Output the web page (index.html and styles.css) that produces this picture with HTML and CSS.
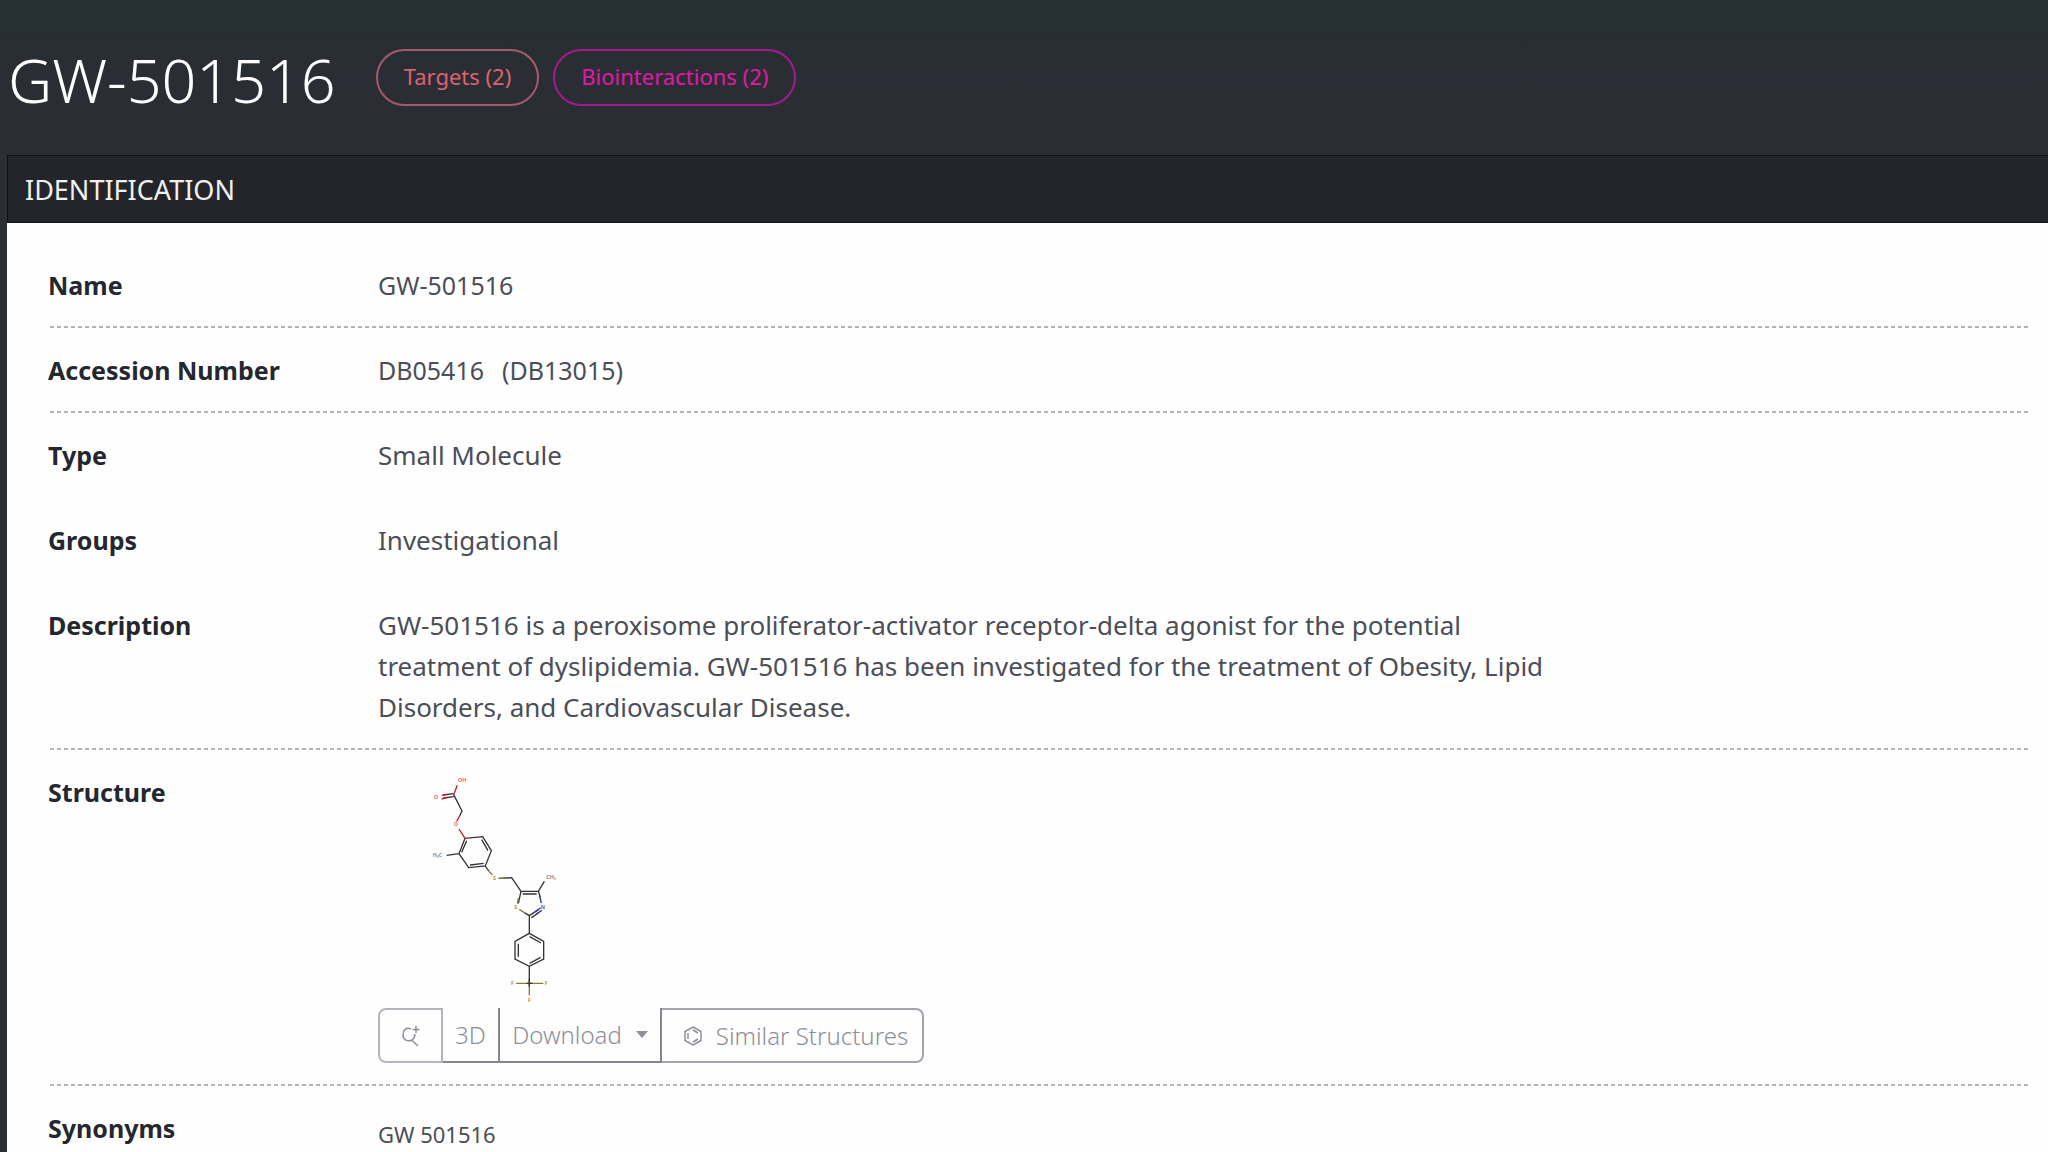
FILE: index.html
```html
<!DOCTYPE html>
<html lang="en">
<head>
<meta charset="utf-8">
<meta name="viewport" content="width=device-width, initial-scale=1">
<title>GW-501516</title>
<link rel="stylesheet" href="styles.css">
</head>
<body>
<header class="drug-header">
  <h1 class="drug-title">GW-501516</h1>
  <nav class="pills">
    <a class="pill pill-targets" href="#targets">Targets (2)</a>
    <a class="pill pill-bio" href="#biointeractions">Biointeractions (2)</a>
  </nav>
</header>
<main class="card">
  <h2 class="card-title">IDENTIFICATION</h2>
  <dl class="facts">
    <div class="row ruled"><dt>Name</dt><dd>GW-501516</dd></div>
    <div class="row ruled"><dt>Accession Number</dt><dd class="ids"><span>DB05416</span><span>(DB13015)</span></dd></div>
    <div class="row"><dt>Type</dt><dd class="prose">Small Molecule</dd></div>
    <div class="row"><dt>Groups</dt><dd class="prose">Investigational</dd></div>
    <div class="row ruled"><dt>Description</dt><dd class="prose"><p class="description">GW-501516 is a peroxisome proliferator-activator receptor-delta agonist for the potential treatment of dyslipidemia. GW-501516 has been investigated for the treatment of Obesity, Lipid Disorders, and Cardiovascular Disease.</p></dd></div>
    <div class="row ruled">
      <dt>Structure</dt>
      <dd>
        <svg class="molecule" viewBox="54 36 600 708" role="img" aria-label="Structure of GW-501516">
          <g fill="none" stroke="#333" stroke-width="4">
            <path d="M281 104L306 153L299 168M281 101L250 105M281 110L250 114"/>
            <path d="M315 235L368 230L394 272L376 318L326 323L297 281ZM320 242L305 277M365 239L384 272M371 310L330 315M297 281L260 286M376 318L386 333M416 355L455 353L483 394L535 394L553 364M488 402L530 402M483 394L475 430M535 394L541 412M508 467L535 449M514 473L535 459M508 467L493 458M508 467V520M508 520L551 544V597L508 619L465 597V544ZM509 530L543 549M475 551V590M542 592L509 610M508 619V670"/>
            <path stroke="#c51f30" d="M281 104L292 76M299 168L290 184M315 235L297 207M261 103L245 106M261 113L245 117"/>
            <path stroke="#85802b" d="M386 333L397 345M416 355H432M475 414L472 431M493 458L478 448M468 670H550M508 670V706"/>
            <path stroke="#303890" d="M539 408L544 429M526 455L542 443M528 463L545 451"/>
            <path d="M500 670H518M508 656V680"/>
          </g>
          <g class="atoms">
            <text class="oxygen" x="294" y="65">OH</text>
            <text class="oxygen" x="222" y="116">O</text>
            <text class="oxygen" x="281" y="199">O</text>
            <text x="218" y="290">H₃C</text>
            <text class="sulfur" x="399" y="360">S</text>
            <text x="559" y="356">CH₃</text>
            <text class="sulfur" x="463" y="446">S</text>
            <text class="nitrogen" x="542" y="446">N</text>
            <text class="fluorine" x="453" y="676">F</text>
            <text class="fluorine" x="554" y="676">F</text>
            <text class="fluorine" x="504" y="725">F</text>
          </g>
        </svg>
        <div class="tools">
          <button class="tool tool-zoom" type="button" aria-label="Zoom structure">
            <svg width="20" height="24" viewBox="0 0 20 24" fill="none" stroke="currentColor" stroke-width="1.500"><path d="M10 5C5 3 2 6 2 11C2 16 7 18 11 16C14 14 14 12 14 10M11 16.500L17 22M15 2V9M11.500 5.500H18.500"/></svg>
          </button>
          <button class="tool tool-3d" type="button">3D</button>
          <button class="tool tool-download" type="button">Download<svg width="12" height="7" viewBox="0 0 12 7"><path fill="currentColor" d="M0 0H12L6 7Z"/></svg></button>
          <button class="tool tool-similar" type="button"><svg width="18" height="20" viewBox="0 0 18 20" fill="none" stroke="currentColor" stroke-width="1.500"><path d="M9 1L17 5.500V14.500L9 19L1 14.500V5.500ZM9 4L14 7M14 13L9 16M4 7V13"/></svg>Similar Structures</button>
        </div>
      </dd>
    </div>
    <div class="row"><dt>Synonyms</dt><dd><ul class="synonyms"><li>GW 501516</li></ul></dd></div>
  </dl>
</main>
</body>
</html>
```
FILE: styles.css
```css
* { box-sizing: border-box; }

body {
  margin: 0;
  overflow-x: hidden;
  background: #2b2e33;
  color: #4b4e57;
  font: 400 25px/41px "Noto Sans", "Open Sans", sans-serif;
}

.drug-header {
  display: flex;
  align-items: center;
  gap: 40px;
  height: 155px;
  padding: 0 8px;
  background: linear-gradient(#262f31 20px, #2b2d35 90px);
}

.drug-title {
  margin: 0;
  padding-top: 4px;
  color: #fff;
  font-size: 61px;
  font-weight: 300;
  line-height: 80px;
}

.pills { display: flex; gap: 14px; }

.pill {
  height: 57px;
  padding: 0 26px;
  border: 2px solid;
  border-radius: 29px;
  font-size: 22px;
  line-height: 51px;
  text-decoration: none;
  white-space: nowrap;
}

.pill-targets { border-color: #a65a6b; color: #dc6372; }
.pill-bio { border-color: #a51b8d; color: #e01aa6; }

.card {
  margin-left: 7px;
  background: #fefefe;
}

.card-title {
  height: 68px;
  margin: 0;
  padding: 0 17px;
  border: 1px solid #0c1316;
  border-right: 0;
  background: #23252a;
  color: #f0f0f0;
  font-size: 27px;
  font-weight: 400;
  line-height: 68px;
}

.facts { margin: 0; padding: 20px 20px 0 41px; }

.row {
  display: grid;
  grid-template-columns: 330px 1fr;
  min-height: 85px;
  padding: 22px 0;
}

.ruled {
  background: repeating-linear-gradient(90deg, #b3b2b8 0 4px, transparent 4px 7px) 2px 100% / 100% 2px no-repeat;
}

dt { color: #24272e; font-weight: 700; }
dd { margin: 0; }
.prose { font-size: 26px; }
.ids { display: flex; gap: 18px; }
.description { max-width: 1200px; margin: 0; }

.molecule { display: block; width: 200px; height: 236px; }
.atoms { fill: #777; font-size: 16px; font-weight: 600; }
.oxygen { fill: #f0465a; }
.sulfur { fill: #8f8b20; }
.nitrogen { fill: #4046c8; }
.fluorine { fill: #a08528; }

.tools { display: flex; height: 55px; margin-bottom: 1px; }

.tool {
  display: flex;
  align-items: center;
  justify-content: center;
  padding: 0;
  border: 0 solid #84878e;
  background: none;
  color: #8d9098;
  font: inherit;
  font-size: 24px;
  font-weight: 300;
  white-space: nowrap;
}

.tool-zoom {
  width: 65px;
  border-width: 2px;
  border-color: #b3b5bc;
  border-radius: 8px 0 0 8px;
}

.tool-3d { width: 55px; border-bottom-width: 2px; }

.tool-download {
  gap: 14px;
  width: 164px;
  border-width: 0 2px 2px;
}

.tool-similar {
  gap: 14px;
  width: 262px;
  padding-left: 8px;
  border-width: 2px 2px 2px 0;
  border-color: #a3a5ac;
  border-radius: 0 8px 8px 0;
}

.synonyms {
  margin: 0;
  padding: 6px 0 0;
  font-size: 22px;
  list-style: none;
}
```
